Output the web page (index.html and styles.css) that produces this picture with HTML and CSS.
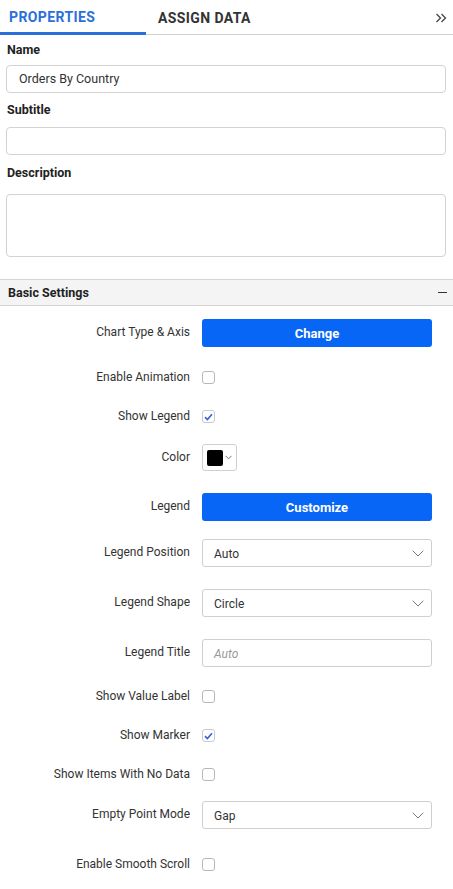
FILE: index.html
```html
<!DOCTYPE html>
<html lang="en">
<head>
<meta charset="utf-8">
<title>Properties</title>
<link rel="stylesheet" href="styles.css">
</head>
<body>
<div class="panel">
  <div class="tabs">
    <div class="tab active">PROPERTIES</div>
    <div class="tab">ASSIGN DATA</div>
    <div class="tab-spacer"></div>
    <div class="collapse-icon">
      <svg width="12" height="10" viewBox="0 0 12 10"><path d="M1.5 1 L5.5 5 L1.5 9 M6.5 1 L10.5 5 L6.5 9" fill="none" stroke="#444" stroke-width="1.3"/></svg>
    </div>
  </div>

  <div class="general">
    <div class="field-label">Name</div>
    <div class="text-input">Orders By Country</div>
    <div class="field-label">Subtitle</div>
    <div class="text-input second"></div>
    <div class="field-label">Description</div>
    <div class="text-area"></div>
  </div>

  <div class="section-header">
    <span>Basic Settings</span>
    <span class="minus"></span>
  </div>

  <div class="settings">
    <div class="row row-ctl">
      <div class="label">Chart Type &amp; Axis</div>
      <div class="control"><div class="btn">Change</div></div>
    </div>
    <div class="row row-cb">
      <div class="label">Enable Animation</div>
      <div class="control"><span class="checkbox"></span></div>
    </div>
    <div class="row row-cb">
      <div class="label">Show Legend</div>
      <div class="control"><span class="checkbox checked"><svg width="9" height="8" viewBox="0 0 9 8"><path d="M1 4.2 L3.4 6.5 L8 1.2" fill="none" stroke="#3b5bdb" stroke-width="1.6"/></svg></span></div>
    </div>
    <div class="row row-color">
      <div class="label">Color</div>
      <div class="control">
        <div class="color-picker">
          <span class="swatch"></span>
          <svg width="7" height="5" viewBox="0 0 7 5"><path d="M0.5 0.8 L3.5 3.8 L6.5 0.8" fill="none" stroke="#666" stroke-width="0.9"/></svg>
        </div>
      </div>
    </div>
    <div class="row row-ctl">
      <div class="label">Legend</div>
      <div class="control"><div class="btn">Customize</div></div>
    </div>
    <div class="row row-ctl tight">
      <div class="label">Legend Position</div>
      <div class="control"><div class="select"><span>Auto</span><svg width="12" height="7" viewBox="0 0 12 7"><path d="M0.7 0.7 L6 6 L11.3 0.7" fill="none" stroke="#777" stroke-width="1"/></svg></div></div>
    </div>
    <div class="row row-ctl">
      <div class="label">Legend Shape</div>
      <div class="control"><div class="select"><span>Circle</span><svg width="12" height="7" viewBox="0 0 12 7"><path d="M0.7 0.7 L6 6 L11.3 0.7" fill="none" stroke="#777" stroke-width="1"/></svg></div></div>
    </div>
    <div class="row row-ctl">
      <div class="label">Legend Title</div>
      <div class="control"><div class="select placeholder"><span>Auto</span></div></div>
    </div>
    <div class="row row-cb nudge">
      <div class="label">Show Value Label</div>
      <div class="control"><span class="checkbox"></span></div>
    </div>
    <div class="row row-cb">
      <div class="label">Show Marker</div>
      <div class="control"><span class="checkbox checked"><svg width="9" height="8" viewBox="0 0 9 8"><path d="M1 4.2 L3.4 6.5 L8 1.2" fill="none" stroke="#3b5bdb" stroke-width="1.6"/></svg></span></div>
    </div>
    <div class="row row-cb">
      <div class="label">Show Items With No Data</div>
      <div class="control"><span class="checkbox"></span></div>
    </div>
    <div class="row row-ctl tight">
      <div class="label">Empty Point Mode</div>
      <div class="control"><div class="select"><span>Gap</span><svg width="12" height="7" viewBox="0 0 12 7"><path d="M0.7 0.7 L6 6 L11.3 0.7" fill="none" stroke="#777" stroke-width="1"/></svg></div></div>
    </div>
    <div class="row row-cb loose">
      <div class="label">Enable Smooth Scroll</div>
      <div class="control"><span class="checkbox"></span></div>
    </div>
  </div>
</div>
</body>
</html>
```

FILE: styles.css
```css
* { box-sizing: border-box; }
html, body { margin: 0; padding: 0; background: #fff; }
body {
  font-family: Roboto, "Liberation Sans", Arial, sans-serif;
  color: #222;
  width: 453px;
  height: 889px;
  overflow: hidden;
}
.panel { width: 453px; }

.tabs {
  display: flex;
  align-items: stretch;
  height: 35px;
  border-bottom: 1px solid #d0d0d0;
}
.tab {
  font-size: 14px;
  font-weight: 700;
  color: #333;
  letter-spacing: 0.4px;
  display: flex;
  align-items: center;
  padding-top: 1px;
}
.tab.active {
  color: #2b6fd8;
  width: 146px;
  padding-left: 9px;
  border-bottom: 3px solid #2b6fd8;
  margin-bottom: -1px;
}
.tab + .tab { padding-left: 12px; }
.tab-spacer { flex: 1; }
.collapse-icon {
  display: flex;
  align-items: center;
  padding-right: 6px;
  padding-top: 1px;
}

.general { padding: 6px 7px 0 6px; }
.field-label {
  font-size: 12.5px;
  font-weight: 700;
  color: #222;
  padding-left: 1px;
  height: 22px;
  line-height: 17px;
}
.text-input {
  height: 28px;
  border: 1px solid #d2d2d2;
  border-radius: 4px;
  font-size: 12.5px;
  color: #333;
  padding: 0 12px;
  line-height: 26px;
  margin: 2px 0 8px 0;
}
.text-input.second { margin: 4px 0 9px 0; }
.text-area {
  height: 63px;
  border: 1px solid #d2d2d2;
  border-radius: 4px;
  margin: 8px 0 22px 0;
}

.section-header {
  display: flex;
  justify-content: space-between;
  align-items: center;
  height: 27px;
  background: #f4f4f4;
  border-top: 1px solid #d4d4d4;
  border-bottom: 1px solid #d4d4d4;
  padding: 0 6px 0 8px;
  font-size: 12.5px;
  font-weight: 700;
  color: #222;
}
.minus {
  width: 9px;
  height: 1.5px;
  background: #333;
}

.settings {
  display: flex;
  flex-direction: column;
  gap: 22px;
  padding-top: 13px;
}
.row {
  display: flex;
  align-items: center;
}
.row-ctl { height: 28px; }
.row-cb { height: 17px; }
.row-color { height: 27px; margin-top: -3px; }
.row.tight { margin-top: -4px; }
.row.nudge { margin-top: -1px; }
.row.loose { margin-top: 5px; }
.label {
  width: 190px;
  text-align: right;
  font-size: 12px;
  color: #333;
  padding-bottom: 2px;
}
.control {
  margin-left: 12px;
  width: 230px;
  display: flex;
  align-items: center;
}
.btn {
  width: 230px;
  height: 28px;
  background: #0766f6;
  color: #fff;
  border-radius: 3px;
  font-size: 13px;
  font-weight: 700;
  display: flex;
  align-items: center;
  justify-content: center;
}
.checkbox {
  width: 13px;
  height: 13px;
  border: 1px solid #b8b8b8;
  border-radius: 3px;
  display: flex;
  align-items: center;
  justify-content: center;
  background: #fff;
}
.checkbox.checked { border-color: #c9c9d4; }
.color-picker {
  width: 35px;
  height: 27px;
  border: 1px solid #cfcfcf;
  border-radius: 3px;
  display: flex;
  align-items: center;
  padding-left: 4px;
  gap: 2px;
}
.swatch {
  width: 16px;
  height: 16px;
  background: #000;
  border-radius: 2px;
}
.select {
  width: 230px;
  height: 28px;
  border: 1px solid #cfcfcf;
  border-radius: 3px;
  display: flex;
  align-items: center;
  justify-content: space-between;
  padding: 0 7px 0 11px;
  font-size: 12px;
  color: #333;
}
.select span { padding-top: 2px; }
.select.placeholder span { color: #999; font-style: italic; }
```
